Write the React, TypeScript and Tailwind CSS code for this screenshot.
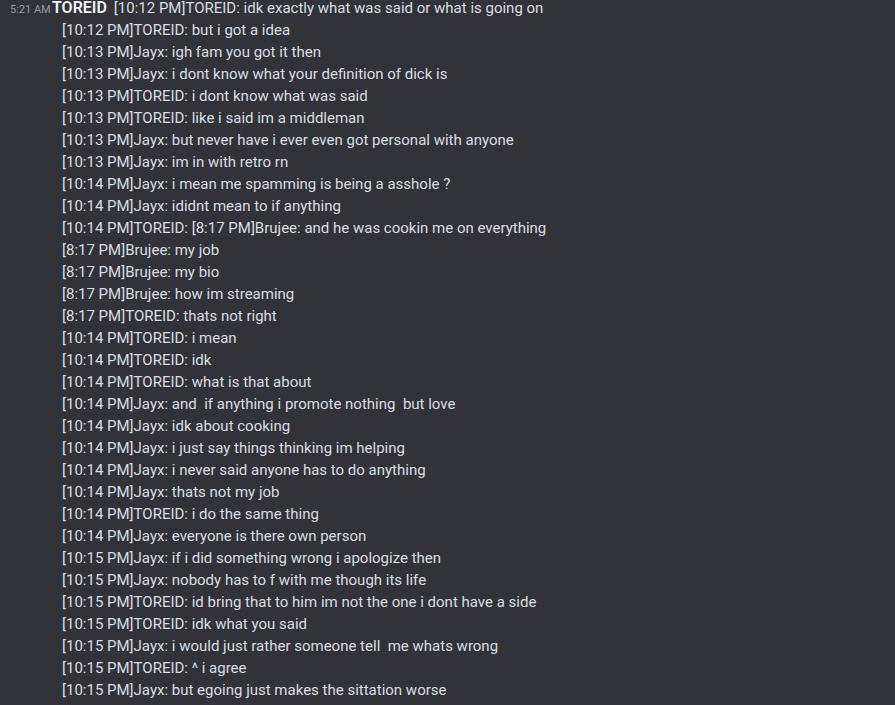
import React from "react";

const lines = [
  "[10:12 PM]TOREID: but i got a idea",
  "[10:13 PM]Jayx: igh fam you got it then",
  "[10:13 PM]Jayx: i dont know what your definition of dick is",
  "[10:13 PM]TOREID: i dont know what was said",
  "[10:13 PM]TOREID: like i said im a middleman",
  "[10:13 PM]Jayx: but never have i ever even got personal with anyone",
  "[10:13 PM]Jayx: im in with retro rn",
  "[10:14 PM]Jayx: i mean me spamming is being a asshole ?",
  "[10:14 PM]Jayx: ididnt mean to if anything",
  "[10:14 PM]TOREID: [8:17 PM]Brujee: and he was cookin me on everything",
  "[8:17 PM]Brujee: my job",
  "[8:17 PM]Brujee: my bio",
  "[8:17 PM]Brujee: how im streaming",
  "[8:17 PM]TOREID: thats not right",
  "[10:14 PM]TOREID: i mean",
  "[10:14 PM]TOREID: idk",
  "[10:14 PM]TOREID: what is that about",
  "[10:14 PM]Jayx: and  if anything i promote nothing  but love",
  "[10:14 PM]Jayx: idk about cooking",
  "[10:14 PM]Jayx: i just say things thinking im helping",
  "[10:14 PM]Jayx: i never said anyone has to do anything",
  "[10:14 PM]Jayx: thats not my job",
  "[10:14 PM]TOREID: i do the same thing",
  "[10:14 PM]Jayx: everyone is there own person",
  "[10:15 PM]Jayx: if i did something wrong i apologize then",
  "[10:15 PM]Jayx: nobody has to f with me though its life",
  "[10:15 PM]TOREID: id bring that to him im not the one i dont have a side",
  "[10:15 PM]TOREID: idk what you said",
  "[10:15 PM]Jayx: i would just rather someone tell  me whats wrong",
  "[10:15 PM]TOREID: ^ i agree",
  "[10:15 PM]Jayx: but egoing just makes the sittation worse",
];

export default function App() {
  return (
    <div className="w-[895px] h-[705px] overflow-hidden bg-[#313338] text-[#dbdee1] text-[15px] leading-[22px] whitespace-pre font-['Roboto',sans-serif]">
      {/* first message of the group, with time and author */}
      <div className="flex items-baseline h-[19px] leading-[16px]">
        <span className="w-[52px] pl-[10px] text-[11px] text-[#949ba4] shrink-0">5:21 AM</span>
        <span className="text-[16px] font-semibold text-[#f2f3f5] mr-[7px]">TOREID</span>
        <span>[10:12 PM]TOREID: idk exactly what was said or what is going on</span>
      </div>
      {lines.map((l, i) => (
        <div key={i} className="pl-[62px] h-[22px]">
          {l}
        </div>
      ))}
    </div>
  );
}
